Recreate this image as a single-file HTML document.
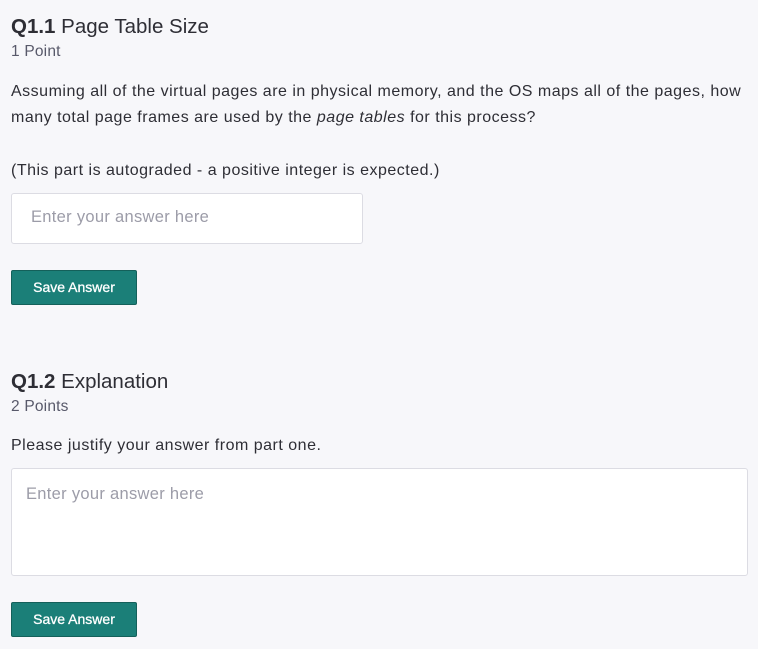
<!DOCTYPE html>
<html><head><style>
html,body{margin:0;padding:0;background:#f7f7fa;width:758px;height:649px;overflow:hidden;font-family:"Liberation Sans",sans-serif;color:#2e2e35}
.abs{position:absolute;white-space:nowrap}
h2{margin:0;font-weight:normal;font-size:20.5px}
.pts{font-size:15.5px;color:#58596a;letter-spacing:0.2px}
p{margin:0;font-size:16px;line-height:26px;letter-spacing:0.5px}
.inp{position:absolute;background:#fff;border:1px solid #dcdce3;border-radius:3px;box-sizing:border-box;color:#9c9ca8;font-size:16.5px;letter-spacing:0.3px}
.btn{position:absolute;background:#1b7f78;border:1px solid #14605a;border-radius:2px;color:#fff;font-size:14px;box-sizing:border-box;text-align:center;line-height:33px;width:126px;height:35px;-webkit-text-stroke:0.3px #fff}
</style></head><body>
<div class="abs" style="left:11px;top:15px"><h2><b>Q1.1</b> Page Table Size</h2></div>
<div class="abs pts" style="left:11px;top:43px">1 Point</div>
<div class="abs" style="left:11px;top:79px;white-space:normal;width:747px"><p>Assuming all of the virtual pages are in physical memory, and the OS maps all of the pages, how many total page frames are used by the <i>page tables</i> for this process?</p></div>
<div class="abs" style="left:11px;top:158px"><p>(This part is autograded - a positive integer is expected.)</p></div>
<div class="inp" style="left:11px;top:193px;width:352px;height:51px;padding:14px 0 0 19px">Enter your answer here</div>
<div class="btn" style="left:11px;top:270px">Save Answer</div>
<div class="abs" style="left:11px;top:370px"><h2><b>Q1.2</b> Explanation</h2></div>
<div class="abs pts" style="left:11px;top:398px">2 Points</div>
<div class="abs" style="left:11px;top:433px"><p>Please justify your answer from part one.</p></div>
<div class="inp" style="left:11px;top:468px;width:737px;height:108px;padding:16px 0 0 14px">Enter your answer here</div>
<div class="btn" style="left:11px;top:602px">Save Answer</div>
</body></html>
